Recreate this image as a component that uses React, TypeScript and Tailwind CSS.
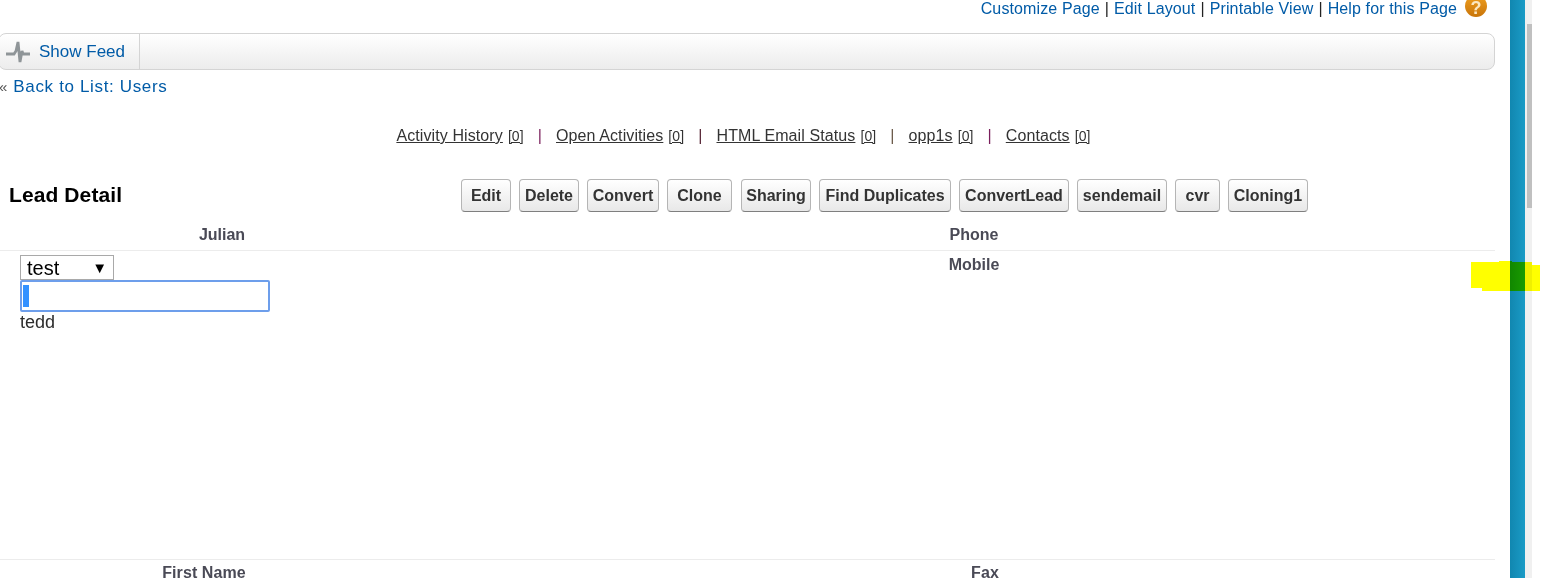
const LINKS = ['Customize Page', 'Edit Layout', 'Printable View', 'Help for this Page']

const RELATED = [
  { label: 'Activity History', bar: 'text-[#7a1f5c]' },
  { label: 'Open Activities', bar: 'text-[#5a2a3a]' },
  { label: 'HTML Email Status', bar: 'text-[#6b5a4a]' },
  { label: 'opp1s', bar: 'text-[#7a1f5c]' },
  { label: 'Contacts', bar: '' },
]

const BUTTONS = [
  { label: 'Edit', w: 'w-[50px]' },
  { label: 'Delete', w: 'w-[60px]' },
  { label: 'Convert', w: 'w-[72px]' },
  { label: 'Clone', w: 'w-[65px]' },
  { label: 'Sharing', w: 'ml-[1px] w-[70px]' },
  { label: 'Find Duplicates', w: 'w-[132px]' },
  { label: 'ConvertLead', w: 'w-[110px]' },
  { label: 'sendemail', w: 'w-[90px]' },
  { label: 'cvr', w: 'w-[45px]' },
  { label: 'Cloning1', w: 'w-[80px]' },
]

function Pulse() {
  return (
    <svg width="24" height="24" viewBox="0 0 24 24" className="blur-[0.7px]">
      <path d="M0 14h8l2-3 2-9 2 20 2-11 1 3h7" fill="none" stroke="#8f9598" strokeWidth="2.8" />
    </svg>
  )
}

export default function App() {
  return (
    <div className="relative flex h-[578px] w-[1541px] overflow-hidden bg-white font-['Liberation_Sans',Arial,sans-serif]">
      <div className="w-[1510px] shrink-0">
        <div className="flex h-[33px] w-[1487px] items-start justify-end gap-[5px] text-[16px] leading-[17px] tracking-[0.12px] text-[#015ba7]">
          {LINKS.map((l, i) => (
            <span key={l} className="flex gap-[5px]">
              {i > 0 && <span className="text-[#222]">|</span>}
              <span>{l}</span>
            </span>
          ))}
          <span className="ml-[3px] flex h-[22px] w-[22px] -translate-y-[5px] items-center justify-center rounded-full bg-gradient-to-b from-[#f0a020] to-[#c87408] pt-[3px] text-[18px] leading-[12px] font-bold text-[#fbe7c0]">?</span>
        </div>

        <div className="ml-[-2px] flex h-[37px] w-[1497px] rounded-[8px] border border-[#d4d4d4] bg-gradient-to-b from-white to-[#ececec]">
          <div className="flex w-[141px] items-center border-r border-[#d4d4d4] pl-[7px]">
            <Pulse />
            <span className="ml-[9px] text-[17px] text-[#015ba7]">Show Feed</span>
          </div>
        </div>

        <div className="mt-[7px] ml-[-1px] h-[20px] text-[17px] leading-[20px] tracking-[0.65px] text-[#015ba7]">
          <span className="text-[#555] text-[15px]">«</span> Back to List: Users
        </div>

        <div className="mt-[29px] flex h-[20px] w-[1487px] justify-center text-[16px] leading-[20px] tracking-[0.1px] text-[#333]">
          {RELATED.map(r => (
            <span key={r.label} className="flex">
              <span className="underline">{r.label}</span>
              <span className="ml-[5px] text-[14px] underline">[0]</span>
              {r.bar && <span className={`mx-[14px] ${r.bar}`}>|</span>}
            </span>
          ))}
        </div>

        <div className="mt-[33px] flex h-[33px] items-center">
          <h2 className="ml-[9px] w-[452px] pb-[2px] text-[21px] tracking-[0.1px] font-bold text-black">Lead Detail</h2>
          <div className="flex gap-[8px]">
            {BUTTONS.map(b => (
              <button key={b.label} className={`h-[33px] ${b.w} rounded-[4px] border border-[#b5b5b5] border-b-[#7f7f7f] bg-gradient-to-b from-white to-[#e8e8e8] text-[16px] font-bold text-[#333]`}>
                {b.label}
              </button>
            ))}
          </div>
        </div>

        <div className="mt-[5px] flex h-[34px] w-[1495px] items-center border-b border-[#ececec] pt-[2px] text-[16px] font-bold text-[#4a4a56]">
          <span className="w-[444px] text-center">Julian</span>
          <span className="ml-[449px] w-[162px] text-center">Phone</span>
        </div>

        <div className="flex h-[309px] w-[1495px] border-b border-[#ececec]">
          <div className="ml-[20px] w-[250px] shrink-0 pt-[4px]">
            <div className="flex h-[25px] w-[94px] items-center justify-between border border-[#a9a9a9] pl-[6px] pr-[6px] text-[20px] leading-none text-black">
              test
              <span className="text-[15px]">▼</span>
            </div>
            <div className="flex h-[32px] w-[250px] items-center rounded-[2px] border-2 border-[#6d9eeb] pl-[1px]">
              <span className="h-[22px] w-[6px] bg-[#3391ff]" />
            </div>
            <div className="mt-[1px] text-[18px] leading-[19px] text-[#2c2c2c]">tedd</div>
          </div>
          <span className="ml-[623px] w-[162px] pt-[2px] text-center text-[16px] font-bold text-[#4a4a56]">Mobile</span>
        </div>

        <div className="flex h-[18px] w-[1495px] pt-[1px] text-[16px] tracking-[0.1px] font-bold text-[#4a4a56]">
          <span className="w-[408px] text-center">First Name</span>
          <span className="ml-[496px] w-[162px] text-center">Fax</span>
        </div>
      </div>

      <div className="w-[15px] shrink-0 bg-gradient-to-r from-[#1187b0] to-[#1a9bc6]" />
      <div className="w-[7px] shrink-0 bg-[#f0f0f0] pl-[2px] pt-[24px]">
        <div className="h-[184px] bg-[#c0c0c0]" />
      </div>

      <div className="absolute left-[1471px] top-[262px] h-[26px] w-[61px] bg-[#ffff00] mix-blend-multiply" />
      <div className="absolute left-[1482px] top-[288px] h-[3px] w-[58px] bg-[#ffff00] mix-blend-multiply" />
      <div className="absolute left-[1532px] top-[265px] h-[23px] w-[8px] bg-[#ffff00] mix-blend-multiply" />
      <div className="absolute left-[1499px] top-[261px] h-[1px] w-[13px] bg-[#ffff00] mix-blend-multiply" />
    </div>
  )
}
